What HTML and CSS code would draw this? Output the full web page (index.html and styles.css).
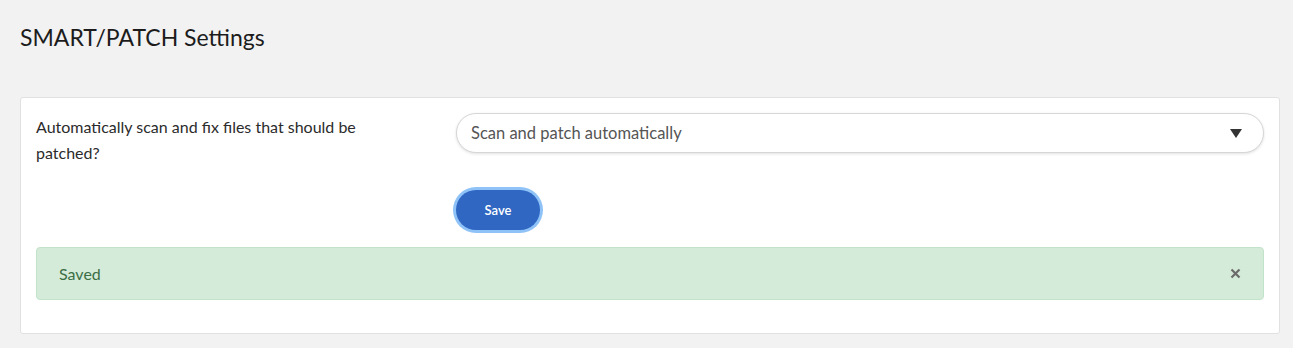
FILE: index.html
```html
<!DOCTYPE html>
<html lang="en">

<head>
    <meta charset="UTF-8">
    <meta name="viewport" content="width=device-width, initial-scale=1.0">
    <title>SMART/PATCH Settings</title>
    <link rel="stylesheet" href="styles.css">
</head>

<body>
    <h1 class="page-title">SMART/PATCH Settings</h1>

    <div class="card">
        <div class="form-row">
            <label class="form-label" for="patchMode">Automatically scan and fix files that should be patched?</label>
            <div class="select-wrap">
                <select id="patchMode" class="form-select">
                    <option>Scan and patch automatically</option>
                    <option>Scan only</option>
                    <option>Disabled</option>
                </select>
                <svg class="select-arrow" width="12" height="9" viewBox="0 0 12 9">
                    <path d="M0 0h12L6 9z" fill="#333"/>
                </svg>
            </div>
        </div>

        <div class="form-row">
            <div></div>
            <div>
                <button class="btn-save">Save</button>
            </div>
        </div>

        <div class="alert-success">
            <span>Saved</span>
            <button class="alert-close" aria-label="Close">
                <svg width="11" height="11" viewBox="0 0 11 11">
                    <path d="M1.5 1.5l8 8M9.5 1.5l-8 8" stroke="#6b6b6b" stroke-width="2.2" stroke-linecap="butt"/>
                </svg>
            </button>
        </div>
    </div>
</body>

</html>
```

FILE: styles.css
```css
body {
    margin: 0;
    padding: 0 13px 0 20px;
    background-color: #f2f2f2;
    font-family: 'Lato', 'Open Sans', sans-serif;
    color: #222;
}

.page-title {
    margin: 0;
    padding: 23px 0 0;
    height: 97px;
    box-sizing: border-box;
    font-size: 23px;
    font-weight: 400;
    line-height: 28px;
    color: #1c1c1c;
}

.card {
    background-color: #ffffff;
    border: 1px solid #e1e1e1;
    border-radius: 3px;
    padding: 15px 15px 33px;
}

.form-row {
    display: grid;
    grid-template-columns: 404px 1fr;
    column-gap: 16px;
}

.form-label {
    font-size: 16px;
    line-height: 26px;
    padding-top: 1px;
    padding-right: 40px;
    color: #2b2b2b;
}

.select-wrap {
    position: relative;
}

.form-select {
    width: 100%;
    height: 40px;
    padding: 0 40px 0 14px;
    border: 1px solid #d6d6d8;
    border-radius: 20px;
    background: #ffffff;
    box-shadow: 0 1px 3px rgba(0, 0, 0, 0.12);
    font-family: inherit;
    font-size: 16.5px;
    color: #555;
    appearance: none;
    -webkit-appearance: none;
}

.select-arrow {
    position: absolute;
    right: 22px;
    top: 16px;
    pointer-events: none;
}

.btn-save {
    margin-top: 24px;
    width: 84px;
    height: 40px;
    border: none;
    border-radius: 20px;
    background-color: #2f67c3;
    box-shadow: 0 0 0 3px #8fc2f7;
    color: #ffffff;
    font-family: inherit;
    font-size: 13px;
    font-weight: 600;
    cursor: pointer;
}

.alert-success {
    margin-top: 17px;
    height: 53px;
    box-sizing: border-box;
    display: flex;
    align-items: center;
    justify-content: space-between;
    padding: 0 22px 0 22px;
    background-color: #d4ebd9;
    border: 1px solid #c2e3ca;
    border-radius: 4px;
    font-size: 16px;
    color: #3b6e45;
}

.alert-close {
    border: none;
    background: none;
    padding: 0;
    display: flex;
    cursor: pointer;
}
```
